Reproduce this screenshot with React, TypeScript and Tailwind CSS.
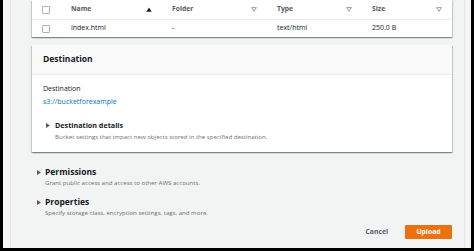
import { Fragment } from "react";

const cardShadow =
  "shadow-[0_1px_1px_0_rgba(0,28,36,0.3),1px_1px_1px_0_rgba(0,28,36,0.15),-1px_1px_1px_0_rgba(0,28,36,0.15)]";

function Checkbox() {
  return <span className="block h-[8px] w-[8px] rounded-[1px] border border-[#aab7b8] bg-white" />;
}

function SortDown() {
  return (
    <svg width="6" height="5" viewBox="0 0 6 5" className="shrink-0">
      <path d="M0.6 0.6 H5.4 L3 4.4 Z" fill="none" stroke="#879596" strokeWidth="0.9" strokeLinejoin="round" />
    </svg>
  );
}

function SortUp() {
  return (
    <svg width="6" height="5" viewBox="0 0 6 5" className="shrink-0">
      <path d="M0.3 4.7 H5.7 L3 0.4 Z" fill="#16191f" />
    </svg>
  );
}

function Caret({ size = 4 }: { size?: number }) {
  return (
    <svg width={size} height={size + 1} viewBox="0 0 4 5" className="shrink-0">
      <path d="M0 0 L4 2.5 L0 5 Z" fill="#545b64" />
    </svg>
  );
}

const columns = [
  { label: "Name", sort: "up" as const },
  { label: "Folder", sort: "down" as const },
  { label: "Type", sort: "down" as const },
  { label: "Size", sort: "down" as const },
];

const row = ["index.html", "-", "text/html", "250.0 B"];

function FilesTable() {
  return (
    <div className={`w-[420px] bg-white ${cardShadow}`}>
      <div className="grid h-[20px] grid-cols-[29px_101px_105px_95px_90px] items-center border-b border-[#eaeded]">
        <div className="pl-[10px]">
          <Checkbox />
        </div>
        {columns.map((c) => (
          <div key={c.label} className="flex items-center justify-between pl-[10px] pr-[10px]">
            <span className="text-[6.8px] font-bold text-[#545b64]">{c.label}</span>
            {c.sort === "up" ? <SortUp /> : <SortDown />}
          </div>
        ))}
      </div>
      <div className="grid h-[17px] grid-cols-[29px_101px_105px_95px_90px] items-center">
        <div className="pl-[10px]">
          <Checkbox />
        </div>
        {row.map((v, i) => (
          <Fragment key={i}>
            <div className="pl-[10px] text-[7px] text-[#16191f]">{v}</div>
          </Fragment>
        ))}
      </div>
    </div>
  );
}

function DestinationCard() {
  return (
    <div className={`mt-[8px] w-[420px] bg-white ${cardShadow}`}>
      <div className="flex h-[30px] items-center border-b border-[#eaeded] bg-[#fafafa] pl-[11px]">
        <h2 className="text-[8.5px] font-bold text-[#16191f]">Destination</h2>
      </div>
      <div className="pb-[11px] pl-[11px] pt-[9px]">
        <div className="text-[7px] leading-[10px] text-[#16191f]">Destination</div>
        <div className="mt-[3px] text-[7px] leading-[10px] text-[#0073bb]">s3://bucketforexample</div>
        <div className="mt-[13px] flex items-center gap-[5px] pl-[3px]">
          <Caret />
          <span className="text-[7.2px] font-bold leading-[11px] text-[#16191f]">Destination details</span>
        </div>
        <div className="mt-[1px] pl-[12px] text-[6.1px] leading-[9px] text-[#687078]">
          Bucket settings that impact new objects stored in the specified destination.
        </div>
      </div>
    </div>
  );
}

function Expandable({ title, desc, className }: { title: string; desc: string; className?: string }) {
  return (
    <div className={className}>
      <div className="flex items-center gap-[4px] pl-[5px]">
        <Caret />
        <span className="text-[8.5px] font-bold leading-[12px] text-[#16191f]">{title}</span>
      </div>
      <div className="pl-[13px] text-[6.1px] leading-[9px] text-[#687078]">{desc}</div>
    </div>
  );
}

export default function App() {
  return (
    <div
      className="flex h-[251px] w-[474px] overflow-hidden bg-black pb-[3px] pl-[3px] pr-[3px]"
      style={{ fontFamily: '"Open Sans", "Noto Sans", sans-serif' }}
    >
      <div className="w-[8px] border-r border-[#e3e3e3] bg-[#f7f7f7]" />
      <div className="flex w-[453px] flex-col bg-[#f2f3f3] pl-[21px]">
        <FilesTable />
        <DestinationCard />
        <Expandable
          className="mt-[14px]"
          title="Permissions"
          desc="Grant public access and access to other AWS accounts."
        />
        <Expandable
          className="mt-[9px]"
          title="Properties"
          desc="Specify storage class, encryption settings, tags, and more."
        />
        <div className="mt-[8px] flex w-[420px] items-center justify-end gap-[17px]">
          <span className="text-[6.8px] font-bold text-[#545b64]">Cancel</span>
          <span className="flex h-[14px] w-[47px] items-center justify-center rounded-[1px] bg-[#ec7211] text-[6.8px] font-bold text-white">
            Upload
          </span>
        </div>
      </div>
      <div className="w-[7px] border-l border-[#e6e6e6] bg-[#f5f5f5]" />
    </div>
  );
}
